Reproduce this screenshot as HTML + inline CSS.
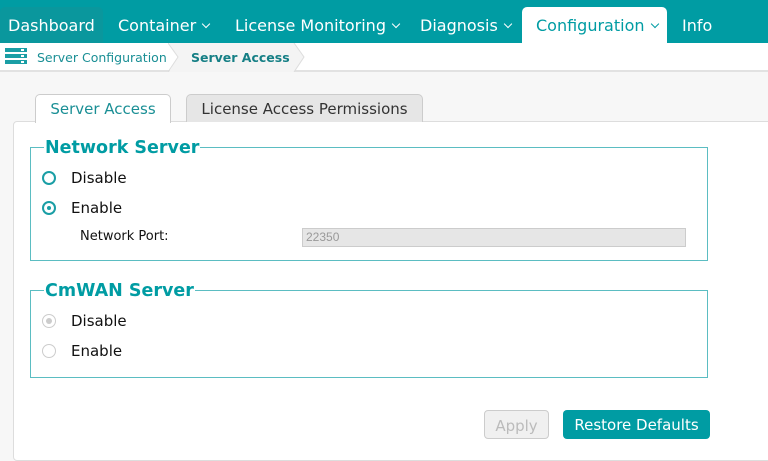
<!DOCTYPE html>
<html><head><style>
*{margin:0;padding:0;box-sizing:border-box}
body{width:768px;height:449px;overflow:hidden;background:#f7f7f7;font-family:"DejaVu Sans","Liberation Sans",sans-serif;position:relative}
.nav{position:absolute;left:0;top:0;width:768px;height:43px;background:#009ca3}
.nav div{position:absolute;top:7px;height:36px;line-height:37px;color:#fff;font-size:16px}
.dash{background:#0a979d;border-radius:5px 5px 0 0}
.cfg{background:#fff;color:#009ca3!important;border-radius:5px 5px 0 0}
.chev{display:inline-block;width:6px;height:6px;border-right:1.3px solid currentColor;border-bottom:1.3px solid currentColor;transform:rotate(45deg);margin-left:7px;vertical-align:4px}
.bc{position:absolute;left:0;top:43px;width:768px;height:29px;background:#fff;border-bottom:2px solid #e2e2e2}
.bc span{position:absolute;top:7px;font-size:12.5px}
.tab{position:absolute;top:94px;height:28px;line-height:28px;font-size:15px;border:1px solid #ccc;border-bottom:none;border-radius:5px 5px 0 0;text-align:center}
.panel{position:absolute;left:13px;top:121px;width:760px;height:340px;background:#fff;border:1px solid #ddd;border-radius:4px}
.fs{position:absolute;border:1px solid #5bbdc2}
.lg{position:absolute;top:-11px;left:13px;background:#fff;padding:0 1px;color:#009ca3;font-weight:bold;font-size:17.5px;line-height:22px}
.opt{position:absolute;font-size:15px;color:#111;line-height:20px}
.r{position:absolute;width:14px;height:14px;border-radius:50%;border:2px solid #1a9ea5}
.btn{position:absolute;top:410px;height:29px;line-height:30px;font-size:15px;border-radius:4px;text-align:center}
</style></head><body>
<div class="nav">
<div class="dash" style="left:0;width:103px;padding-left:8px">Dashboard</div>
<div style="left:118px">Container<span class="chev"></span></div>
<div style="left:235px">License Monitoring<span class="chev"></span></div>
<div style="left:420px">Diagnosis<span class="chev"></span></div>
<div class="cfg" style="left:522px;width:145px;padding-left:14px">Configuration<span class="chev"></span></div>
<div style="left:682px">Info</div>
</div>
<div class="bc">
<svg style="position:absolute;left:5px;top:5px" width="24" height="18"><g fill="#1a9ea5"><rect x="0" y="0" width="22" height="4"/><rect x="0" y="6" width="22" height="4"/><rect x="0" y="12" width="22" height="4"/></g><g fill="#fff"><rect x="16" y="1" width="3" height="2"/><rect x="16" y="7" width="3" height="2"/><rect x="16" y="13" width="3" height="2"/></g></svg>
<span style="left:37px;color:#1a8f95">Server Configuration</span>
<svg style="position:absolute;left:168px;top:0" width="140" height="29"><path d="M1 0 L126 0 L136 14 L126 29 L1 29 L10 14Z" fill="#f4f4f4"/><path d="M0 0 L10 14 L0 29" fill="none" stroke="#ddd"/><path d="M126 0 L136 14 L126 29" fill="none" stroke="#ddd"/></svg>
<span style="left:191px;color:#157f85;font-weight:bold">Server Access</span>
</div>
<div class="panel"></div>
<div class="tab" style="left:35px;width:136px;background:#fff;color:#1a8f95;height:29px">Server Access</div>
<div class="tab" style="left:186px;width:237px;background:#e6e6e6;color:#333">License Access Permissions</div>
<div class="fs" style="left:30px;top:147px;width:678px;height:114px"><div class="lg">Network Server</div></div>
<div class="r" style="left:42px;top:171px"></div><div class="opt" style="left:71px;top:168px">Disable</div>
<div class="r" style="left:42px;top:201px"><div style="position:absolute;left:3px;top:3px;width:4px;height:4px;border-radius:50%;background:#1a9ea5"></div></div><div class="opt" style="left:71px;top:198px">Enable</div>
<div class="opt" style="left:80px;top:227px;font-size:13px">Network Port:</div>
<div style="position:absolute;left:302px;top:228px;width:384px;height:19px;background:#e6e6e6;border:1px solid #ccc;color:#999;font-size:12px;line-height:17px;padding-left:3px;font-family:'Liberation Sans',sans-serif">22350</div>
<div class="fs" style="left:30px;top:290px;width:678px;height:88px"><div class="lg">CmWAN Server</div></div>
<div class="r" style="left:42px;top:314px;border:1px solid #ccc"><div style="position:absolute;left:3px;top:3px;width:6px;height:6px;border-radius:50%;background:#ccc"></div></div><div class="opt" style="left:71px;top:311px">Disable</div>
<div class="r" style="left:42px;top:344px;border:1px solid #ccc"></div><div class="opt" style="left:71px;top:341px">Enable</div>
<div class="btn" style="left:484px;width:65px;background:#f0f0f0;border:1px solid #ccc;color:#bbb">Apply</div>
<div class="btn" style="left:563px;width:147px;background:#009ca3;color:#fff">Restore Defaults</div>
</body></html>
